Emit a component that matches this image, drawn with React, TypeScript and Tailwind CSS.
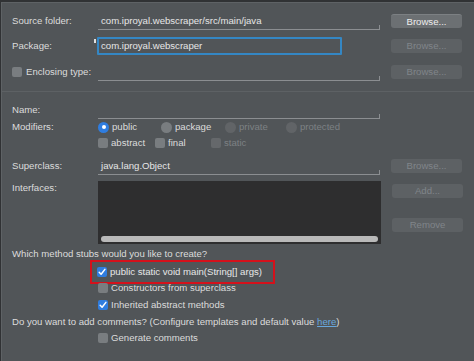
import React from "react";

const txt = "text-[#dcdcdc]";

function Field({ children, w = "w-[282px]" }: { children?: React.ReactNode; w?: string }) {
  return (
    <div className={`${w} h-[18px] flex items-end`}>
      <div className="flex-1 h-full flex items-center border-b border-[#8b8e91] pl-[3px] text-[#e6e6e6] whitespace-nowrap">{children}</div>
      <div className="w-px h-[5px] bg-[#8b8e91]" />
    </div>
  );
}

function Btn({ label, disabled }: { label: string; disabled?: boolean }) {
  return (
    <div
      className={`ml-[11px] w-[71px] h-[14px] rounded-[3px] flex items-center justify-center text-[9.6px] ${
        disabled ? "bg-[#5d6164] text-[#80858a]" : "bg-[#6c7073] text-[#eeeeee] border-t border-[#7c8083]"
      }`}
    >
      {label}
    </div>
  );
}

function Check({ checked, disabled }: { checked?: boolean; disabled?: boolean }) {
  if (checked)
    return (
      <div className="w-[10px] h-[10px] shrink-0 rounded-[2px] bg-[#2f7de0] flex items-center justify-center">
        <svg width="8" height="8" viewBox="0 0 8 8">
          <path d="M1.2 4.2 L3.1 6.2 L6.9 1.4" stroke="white" strokeWidth="1.5" fill="none" strokeLinecap="round" strokeLinejoin="round" />
        </svg>
      </div>
    );
  return <div className={`w-[10px] h-[10px] shrink-0 rounded-[2px] ${disabled ? "bg-[#65686b]" : "bg-[#797d80]"}`} />;
}

function Radio({ selected, disabled }: { selected?: boolean; disabled?: boolean }) {
  if (selected)
    return (
      <div className="w-[11px] h-[11px] shrink-0 rounded-full bg-[#2f7de0] flex items-center justify-center">
        <div className="w-[4px] h-[4px] rounded-full bg-white" />
      </div>
    );
  return <div className={`w-[11px] h-[11px] shrink-0 rounded-full ${disabled ? "bg-[#616467]" : "bg-[#797d80]"}`} />;
}

export default function App() {
  return (
    <div
      className={`w-[474px] h-[361px] bg-[#303234] overflow-hidden ${txt}`}
      style={{ fontFamily: '"Liberation Sans", Arial, sans-serif' }}
    >
      <div className="w-[480px] h-[370px] ml-[1px] mt-[2px] bg-[#515558] border-l border-t border-[#5e6265] text-[9.6px] leading-none whitespace-nowrap">
        {/* section 1 */}
        <div className="pt-[9px] pl-[10px]">
          <div className="flex items-center h-[18px]">
            <div className="w-[86px]">Source folder:</div>
            <Field>com.iproyal.webscraper/src/main/java</Field>
            <Btn label="Browse..." />
          </div>
          <div className="flex items-center h-[18px] mt-[7px]">
            <div className="w-[82px]">Package:</div>
            <div className="w-[3px] h-full relative">
              <span className="absolute left-0 top-[2px] w-[2px] h-[4px] bg-[#e0e0e0]" />
            </div>
            <div className="w-[245px] h-[18px] border-2 border-[#3487c4] rounded-[1px] flex items-center pl-[2px] text-[#e6e6e6]">
              com.iproyal.webscraper
            </div>
            <div className="w-[38px]" />
            <Btn label="Browse..." disabled />
          </div>
          <div className="flex items-center h-[18px] mt-[8px]">
            <div className="w-[86px] flex items-center gap-[4px]">
              <Check />
              <span>Enclosing type:</span>
            </div>
            <Field />
            <Btn label="Browse..." disabled />
          </div>
        </div>
        {/* separator */}
        <div className="mt-[10px] h-px bg-[#45484b] border-b border-[#5d6164] w-[474px]" />
        {/* section 2 */}
        <div className="pl-[10px] pt-[9px]">
          <div className="flex items-center h-[18px]">
            <div className="w-[86px]">Name:</div>
            <Field />
          </div>
          <div className="flex items-center h-[16px]">
            <div className="w-[86px]">Modifiers:</div>
            <div className="flex items-center">
              <div className="w-[63px] flex items-center gap-[3px]"><Radio selected /><span>public</span></div>
              <div className="w-[64px] flex items-center gap-[3px]"><Radio /><span>package</span></div>
              <div className="w-[61px] flex items-center gap-[3px] text-[#7d8184]"><Radio disabled /><span>private</span></div>
              <div className="flex items-center gap-[3px] text-[#7d8184]"><Radio disabled /><span>protected</span></div>
            </div>
          </div>
          <div className="flex items-center h-[16px]">
            <div className="w-[86px]" />
            <div className="flex items-center">
              <div className="w-[57px] flex items-center gap-[3px]"><Check /><span>abstract</span></div>
              <div className="w-[56px] flex items-center gap-[3px]"><Check /><span>final</span></div>
              <div className="flex items-center gap-[3px] text-[#7d8184]"><Check disabled /><span>static</span></div>
            </div>
          </div>
          <div className="flex items-center h-[18px] mt-[6px]">
            <div className="w-[86px]">Superclass:</div>
            <Field>java.lang.Object</Field>
            <Btn label="Browse..." disabled />
          </div>
          <div className="flex items-start mt-[6px]">
            <div className="w-[86px] pt-[2px]">Interfaces:</div>
            <div className="w-[283px] h-[63px] bg-[#2e2e2f] flex flex-col justify-end pb-[2px] px-[3px]">
              <div className="h-[6px] rounded-full bg-[#b9b9b9]" />
            </div>
            <div className="flex flex-col">
              <div className="mt-[3px]"><Btn label="Add..." disabled /></div>
              <div className="mt-[20px]"><Btn label="Remove" disabled /></div>
            </div>
          </div>
        </div>
        {/* section 3 */}
        <div className="pl-[10px] pt-[2px]">
          <div className="h-[16px] flex items-center">Which method stubs would you like to create?</div>
          <div className="ml-[78px] w-[185px] h-[24px] border-2 border-[#d4111b] flex items-center pl-[5px] gap-[3px] -mt-[2px]">
            <Check checked />
            <span className="text-[#e8e8e8]">public static void main(String[] args)</span>
          </div>
          <div className="ml-[86px] h-[16px] flex items-center gap-[3px] -mt-[4px]"><Check /><span>Constructors from superclass</span></div>
          <div className="ml-[86px] h-[17px] flex items-center gap-[3px]"><Check checked /><span>Inherited abstract methods</span></div>
          <div className="h-[17px] flex items-center">
            Do you want to add comments? (Configure templates and default value&nbsp;
            <span className="text-[#68a7dd] underline">here</span>)
          </div>
          <div className="ml-[86px] h-[16px] flex items-center gap-[3px]"><Check /><span>Generate comments</span></div>
        </div>
      </div>
    </div>
  );
}
